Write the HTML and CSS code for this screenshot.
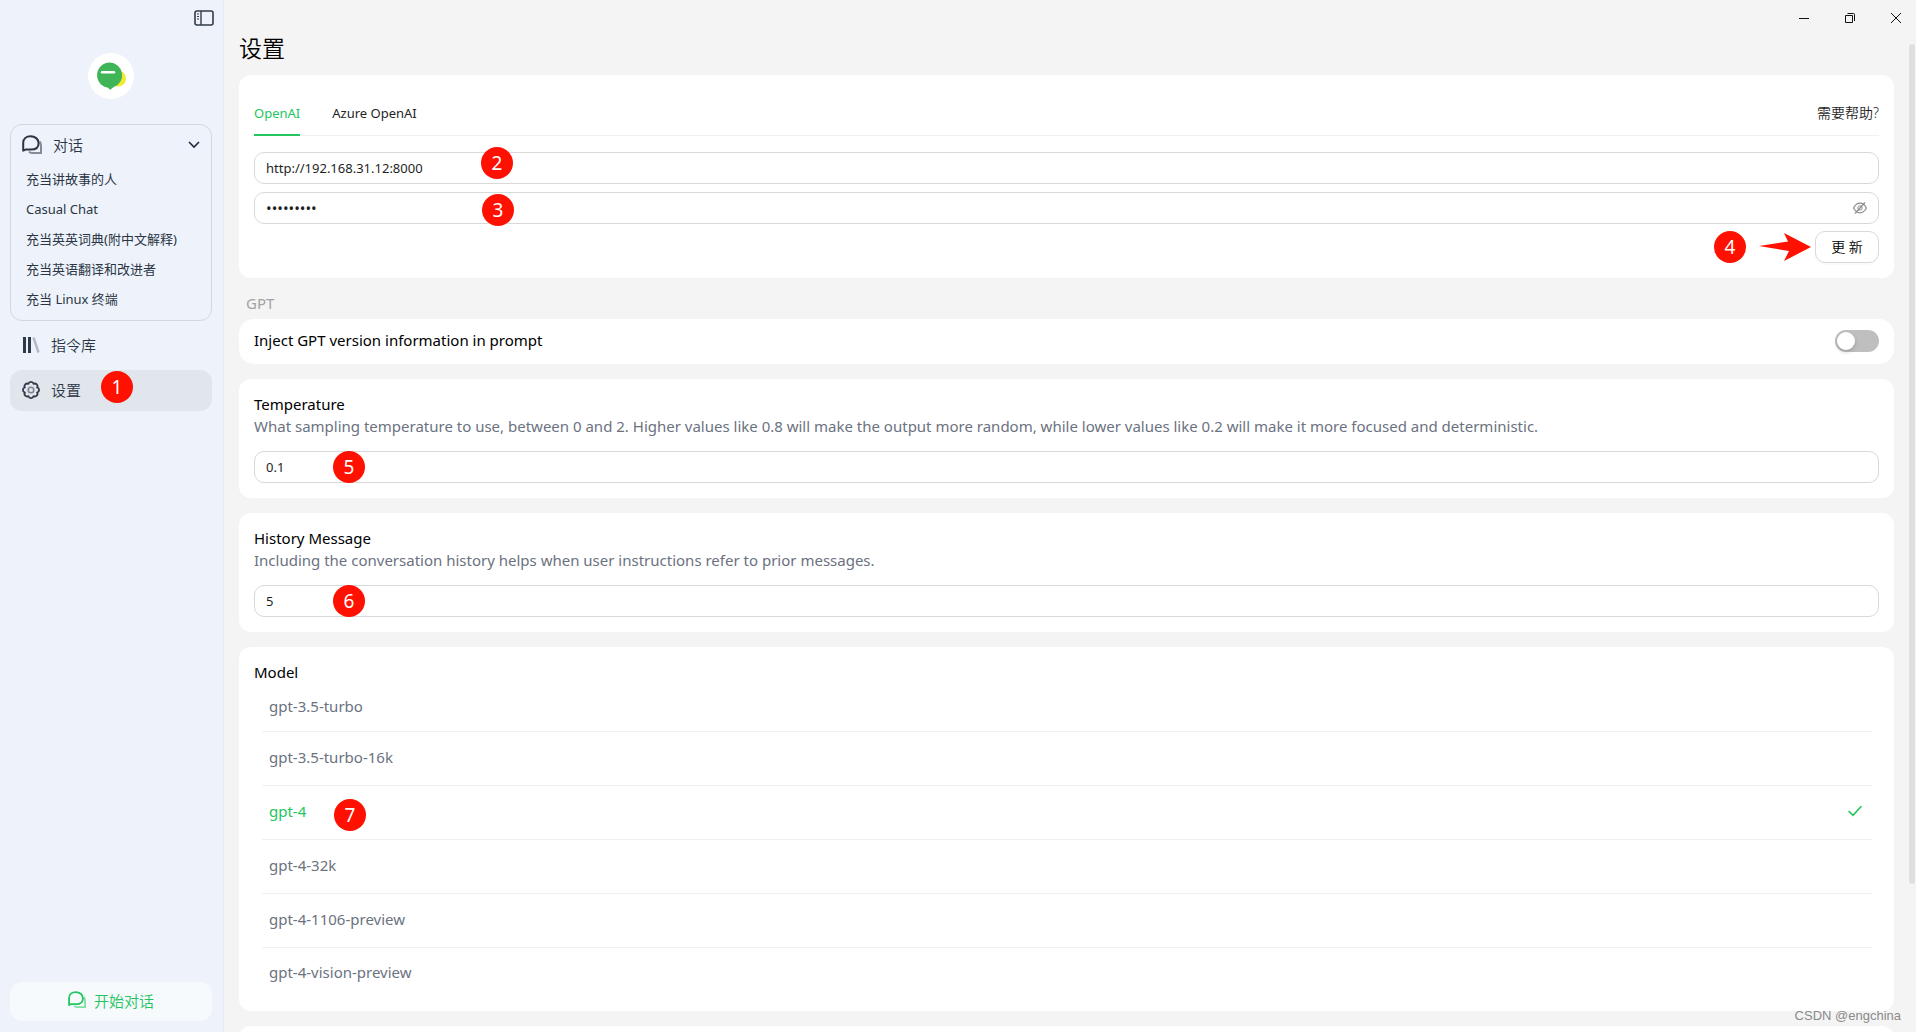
FILE: index.html
```
<!DOCTYPE html>
<html lang="zh-CN">
<head>
  <meta charset="UTF-8" />
  <meta name="viewport" content="width=device-width, initial-scale=1.0"/>
  <title>设置</title>
  <link rel="stylesheet" href="styles.css">
</head>
<body>

  <!-- shared icons -->
  <svg class="defs" width="0" height="0">
    <symbol id="icon-chat" viewBox="0 0 20 20">
      <path d="M17.600 6.500Q19 8 19 11V18H10Q8 18 7 16.500" fill="none" stroke="currentColor" stroke-width="2" opacity=".55"/>
      <path d="M1.200 15V7.800C1.200 3.900 4.300 1.200 8.600 1.200S16.600 4 16.600 8.200 13.400 14.600 9 14.600H3.500L1.200 15.600Z" fill="none" stroke="currentColor" stroke-width="2" stroke-linejoin="round"/>
    </symbol>
  </svg>

  <aside class="sidebar">
    <div class="sidebar-top">
      <button class="icon-btn" aria-label="收起侧栏">
        <svg width="20" height="16" viewBox="0 0 20 16" fill="none" stroke="#323b49">
          <rect x="1" y="1" width="18" height="14" rx="2" stroke-width="1.6"/>
          <path d="M7 1V15" stroke-width="1.4"/>
          <path d="M3 4H5M3 6.5H5M3 9H5" stroke-width="1"/>
        </svg>
      </button>
    </div>

    <div class="logo">
      <svg width="30" height="28" viewBox="0 0 30 28">
        <circle cx="22" cy="16.5" r="8" fill="#f2ea31"/>
        <path d="M13.3 .6A12.6 12.6 0 0 1 17.4 25.2L14.2 27.8L11.5 25.6A12.6 12.6 0 0 1 13.3 .6Z" fill="#40b558"/>
        <path d="M6 10.3H18" stroke="#fff" stroke-width="2.4" stroke-linecap="round"/>
      </svg>
    </div>

    <nav class="nav">
      <div class="chat-group">
        <button class="nav-item group-head">
          <svg class="nav-icon" width="20" height="20"><use href="#icon-chat"/></svg>
          <span>对话</span>
          <svg class="chevron" width="12" height="8" viewBox="0 0 12 8" fill="none" stroke="#1f2937" stroke-width="1.6">
            <path d="M1 1L6 6L11 1"/>
          </svg>
        </button>
        <ul class="chat-list">
          <li><a href="#">充当讲故事的人</a></li>
          <li><a href="#">Casual Chat</a></li>
          <li><a href="#">充当英英词典(附中文解释)</a></li>
          <li><a href="#">充当英语翻译和改进者</a></li>
          <li><a href="#">充当 Linux 终端</a></li>
        </ul>
      </div>
      <a class="nav-item" href="#">
        <svg class="nav-icon" width="18" height="18" viewBox="0 0 18 18" fill="none" stroke="#2f3a49" stroke-width="3">
          <path d="M2.5 1V17M7.5 1V17"/>
          <path d="M11.5 1.5L16.5 16.5" stroke="#b4bac4" stroke-width="2.4"/>
        </svg>
        <span>指令库</span>
      </a>
      <a class="nav-item active" href="#">
        <svg class="nav-icon" width="18" height="18" viewBox="0 0 18 18" fill="none" stroke="#2f3a49" stroke-width="1.8" stroke-linejoin="round">
          <path d="M15.1 6.47A2.6 2.6 0 0 1 15.1 11.53A2.6 2.6 0 0 1 11.53 15.1A2.6 2.6 0 0 1 6.47 15.1A2.6 2.6 0 0 1 2.9 11.53A2.6 2.6 0 0 1 2.9 6.47A2.6 2.6 0 0 1 6.47 2.9A2.6 2.6 0 0 1 11.53 2.9A2.6 2.6 0 0 1 15.1 6.47Z"/>
          <circle cx="9" cy="9" r="2.8" stroke="#7d8590" stroke-width="1.6"/>
        </svg>
        <span>设置</span>
        <span class="badge badge-nav">1</span>
      </a>
    </nav>

    <button class="start-btn">
      <svg width="18" height="18"><use href="#icon-chat"/></svg>
      开始对话
    </button>
  </aside>

  <main class="main">
    <header class="titlebar">
      <button class="icon-btn" aria-label="最小化">
        <svg width="10" height="10" viewBox="0 0 10 10" stroke="#111"><path d="M0 5.5H10"/></svg>
      </button>
      <button class="icon-btn" aria-label="还原">
        <svg width="10" height="10" viewBox="0 0 10 10" fill="none" stroke="#111"><path d="M.5 2.5H7.5V9.5H.5ZM2.5 .5H8.5Q9.5 .5 9.5 1.5V8"/></svg>
      </button>
      <button class="icon-btn" aria-label="关闭">
        <svg width="10" height="10" viewBox="0 0 10 10" stroke="#111"><path d="M0 0L10 10M10 0L0 10"/></svg>
      </button>
    </header>

    <div class="content">
      <h1>设置</h1>

      <section class="card account">
        <div class="tabs">
          <button class="tab active">OpenAI</button>
          <button class="tab">Azure OpenAI</button>
          <a class="help" href="#">需要帮助?</a>
        </div>
        <div class="field">
          <input type="text" value="http://192.168.31.12:8000" aria-label="API 地址">
          <span class="badge badge-url">2</span>
        </div>
        <div class="field">
          <input type="password" value="123456789" aria-label="API Key">
          <button class="icon-btn eye" aria-label="显示密码">
            <svg width="14" height="12" viewBox="0 0 14 12" fill="none" stroke="#8c8c8c">
              <path d="M.6 6Q3 1.2 7 1.2T13.4 6Q11 10.8 7 10.8T.6 6Z" stroke-width="1.2"/>
              <circle cx="7" cy="6" r="2.2"/>
              <path d="M2 11.5L12 .5" stroke-width="1.2"/>
            </svg>
          </button>
          <span class="badge badge-key">3</span>
        </div>
        <div class="actions">
          <span class="badge badge-update">4</span>
          <svg class="arrow" width="52" height="28" viewBox="0 0 52 28"><path d="M0 13L29 8.5L25 0L52 14L25 28L30 18Z" fill="#ff1000"/></svg>
          <button class="update-btn">更 新</button>
        </div>
      </section>

      <h2>GPT</h2>
      <section class="card inject">
        <label for="inject">Inject GPT version information in prompt</label>
        <input class="switch" type="checkbox" id="inject">
      </section>

      <section class="card">
        <label class="label" for="temperature">Temperature</label>
        <p>What sampling temperature to use, between 0 and 2. Higher values like 0.8 will make the output more random, while lower values like 0.2 will make it more focused and deterministic.</p>
        <div class="field">
          <input type="text" id="temperature" value="0.1">
          <span class="badge badge-value">5</span>
        </div>
      </section>

      <section class="card">
        <label class="label" for="history">History Message</label>
        <p>Including the conversation history helps when user instructions refer to prior messages.</p>
        <div class="field">
          <input type="text" id="history" value="5">
          <span class="badge badge-value">6</span>
        </div>
      </section>

      <section class="card models">
        <h3 class="label">Model</h3>
        <ul class="model-list">
          <li>gpt-3.5-turbo</li>
          <li>gpt-3.5-turbo-16k</li>
          <li class="selected">gpt-4
            <svg width="14" height="12" viewBox="0 0 14 12" fill="none" stroke="#22c55e" stroke-width="1.6"><path d="M.6 6L5 10.4L13.4 1.2"/></svg>
            <span class="badge badge-model">7</span>
          </li>
          <li>gpt-4-32k</li>
          <li>gpt-4-1106-preview</li>
          <li>gpt-4-vision-preview</li>
        </ul>
      </section>

      <section class="card next"></section>
    </div>

    <div class="scroll-track"><div class="scroll-thumb"></div></div>
    <div class="watermark">CSDN @engchina</div>
  </main>

</body>
</html>
```
FILE: styles.css
```
* {
  box-sizing: border-box;
}

body {
  margin: 0;
  height: 100vh;
  display: flex;
  overflow: hidden;
  background: #f4f4f4;
  color: #000;
  font-family: "Noto Sans", "Noto Sans CJK SC", sans-serif;
  font-size: 15px;
}

button, input {
  font: inherit;
  color: inherit;
}

button {
  border: none;
  background: none;
  padding: 0;
  cursor: pointer;
}

a {
  color: inherit;
  text-decoration: none;
}

ul {
  list-style: none;
  margin: 0;
  padding: 0;
}

svg {
  flex: none;
  display: block;
}

.defs {
  position: absolute;
}

/* sidebar */
.sidebar {
  width: 224px;
  flex: none;
  display: flex;
  flex-direction: column;
  padding: 10px 11px 11px 10px;
  background: #eef3fb;
  border-right: 1px solid #e5e9f0;
  color: #2b3544;
}

.sidebar-top {
  display: flex;
  justify-content: flex-end;
  margin-right: -2px;
}

.icon-btn {
  display: flex;
  align-items: center;
  justify-content: center;
}

.logo {
  width: 46px;
  height: 46px;
  margin: 27px auto 25px;
  border-radius: 50%;
  background: #fff;
  display: flex;
  align-items: center;
  justify-content: center;
}

.nav {
  display: flex;
  flex-direction: column;
  gap: 4px;
  font-weight: 350;
}

.chat-group {
  border: 1px solid #d3d8e0;
  border-radius: 12px;
  padding-bottom: 6px;
}

.nav-item {
  position: relative;
  display: flex;
  align-items: center;
  height: 41px;
  padding: 0 12px 2px;
  border-radius: 12px;
}

.nav-item.active {
  background: #e1e5ec;
}

.nav-icon {
  margin-right: 11px;
}

.group-head {
  width: 100%;
  height: 39px;
  padding: 0 11px;
}

.chevron {
  margin-left: auto;
}

.chat-list a {
  display: block;
  height: 30px;
  line-height: 30px;
  padding-left: 15px;
  font-size: 13px;
  font-weight: 400;
  color: #2b3544;
  white-space: nowrap;
}

.start-btn {
  display: flex;
  align-items: center;
  justify-content: center;
  gap: 8px;
  height: 39px;
  margin-top: auto;
  padding-bottom: 3px;
  border-radius: 12px;
  background: #f6fafd;
  color: #22c55e;
  font-weight: 350;
}

/* main area */
.main {
  position: relative;
  flex: 1;
  min-width: 0;
  overflow: hidden;
}

.titlebar {
  display: flex;
  justify-content: flex-end;
  gap: 36px;
  height: 36px;
  padding-right: 15px;
}

.content {
  padding: 0 22px 0 15px;
  display: flex;
  flex-direction: column;
}

h1 {
  margin: -5px 0 10px;
  font-size: 23px;
  line-height: 34px;
  font-weight: 350;
}

h2 {
  margin: 0 7px 4px;
  font-size: 15px;
  line-height: 24px;
  font-weight: 400;
  color: #a3a3a3;
}

.card {
  margin-bottom: 15px;
  padding: 14px 15px 15px;
  border-radius: 12px;
  background: #fff;
}

.account {
  margin-bottom: 13px;
}

.tabs {
  display: flex;
  gap: 32px;
  height: 47px;
  margin-bottom: 16px;
  border-bottom: 1px solid #f0f0f0;
  font-size: 13px;
  color: #1f1f1f;
}

.tab {
  height: 47px;
  padding-top: 3px;
  border-bottom: 2px solid transparent;
}

.tab.active {
  color: #22c55e;
  border-color: #22c55e;
}

.help {
  margin-left: auto;
  font-size: 14px;
  font-weight: 350;
  line-height: 47px;
}

.field {
  position: relative;
}

.field + .field {
  margin-top: 8px;
}

.field input {
  display: block;
  width: 100%;
  height: 32px;
  padding: 0 11px;
  border: 1px solid #d9d9d9;
  border-radius: 10px;
  background: #fff;
  font-size: 13px;
  color: #1f1f1f;
  outline: none;
}

.field input[type="password"] {
  font-size: 15px;
}

.eye {
  position: absolute;
  top: 10px;
  right: 12px;
}

.actions {
  display: flex;
  align-items: center;
  justify-content: flex-end;
  margin-top: 7px;
}

.update-btn {
  width: 64px;
  height: 32px;
  border: 1px solid #d9d9d9;
  border-radius: 10px;
  background: #fff;
  box-shadow: 0 2px 0 rgba(0, 0, 0, 0.02);
  font-size: 14px;
  font-weight: 350;
  line-height: 28px;
}

.arrow {
  margin: 0 4px 0 13px;
}

.inject {
  display: flex;
  align-items: center;
  justify-content: space-between;
  height: 45px;
  border-radius: 15px;
}

.inject label {
  padding-bottom: 2px;
}

.switch {
  appearance: none;
  width: 44px;
  height: 22px;
  margin: 0;
  padding: 2px;
  border-radius: 11px;
  background: #bfbfbf;
}

.switch::before {
  content: "";
  display: block;
  width: 18px;
  height: 18px;
  border-radius: 50%;
  background: #fff;
  box-shadow: 0 2px 4px rgba(0, 35, 11, 0.2);
}

.label {
  display: block;
  margin: 0;
  font-size: 15px;
  line-height: 22px;
  font-weight: 400;
}

.card p {
  margin: 0 0 13px;
  line-height: 23px;
  color: #6b7280;
}

.model-list {
  padding: 0 7px 0 8px;
}

.model-list li {
  position: relative;
  display: flex;
  align-items: center;
  justify-content: space-between;
  height: 54px;
  padding: 0 10px 3px 7px;
  border-bottom: 1px solid #f0f0f0;
  color: #6b7280;
}

.model-list li:first-child {
  height: 49px;
}

.model-list li:last-child {
  height: 48px;
  padding-bottom: 0;
  border-bottom: none;
}

.model-list li.selected {
  color: #22c55e;
}

.next {
  height: 60px;
}

/* numbered markers */
.badge {
  width: 32px;
  height: 32px;
  border-radius: 50%;
  background: #ff1000;
  color: #fff;
  font-size: 19px;
  font-weight: 400;
  line-height: 32px;
  text-align: center;
}

.badge-nav, .badge-url, .badge-key, .badge-value, .badge-model {
  position: absolute;
}

.badge-nav {
  left: 91px;
  top: 1px;
}

.badge-url {
  left: 227px;
  top: -5px;
}

.badge-key {
  left: 228px;
  top: 2px;
}

.badge-value {
  left: 79px;
  top: 0;
}

.badge-model {
  left: 72px;
  top: 13px;
}

/* overlay scrollbar */
.scroll-track {
  position: absolute;
  top: 44px;
  right: 1px;
  bottom: 0;
  width: 6px;
}

.scroll-thumb {
  height: 85%;
  border-radius: 3px;
  background: #dfdfdf;
}

.watermark {
  position: absolute;
  right: 15px;
  bottom: 6px;
  font-family: "Liberation Sans", sans-serif;
  font-size: 13px;
  line-height: 20px;
  color: #8a8a8a;
}
```
